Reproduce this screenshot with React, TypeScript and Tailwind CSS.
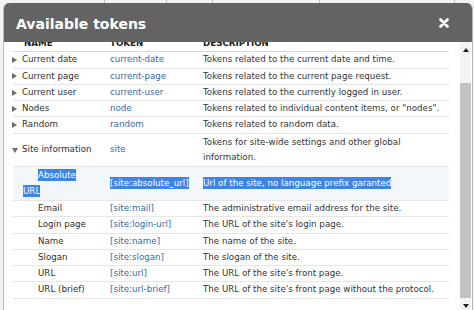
import React from "react";

type Row = {
  name: string;
  token: string;
  desc: React.ReactNode;
  open?: boolean;
  child?: boolean;
  tall?: boolean;
};

const rows: Row[] = [
  { name: "Current date", token: "current-date", desc: "Tokens related to the current date and time." },
  { name: "Current page", token: "current-page", desc: "Tokens related to the current page request." },
  { name: "Current user", token: "current-user", desc: "Tokens related to the currently logged in user." },
  { name: "Nodes", token: "node", desc: 'Tokens related to individual content items, or "nodes".' },
  { name: "Random", token: "random", desc: "Tokens related to random data." },
  {
    name: "Site information",
    token: "site",
    open: true,
    tall: true,
    desc: (
      <>
        Tokens for site-wide settings and other global
        <br />
        information.
      </>
    ),
  },
];

const children: Row[] = [
  { name: "Email", token: "[site:mail]", desc: "The administrative email address for the site.", child: true },
  { name: "Login page", token: "[site:login-url]", desc: "The URL of the site's login page.", child: true },
  { name: "Name", token: "[site:name]", desc: "The name of the site.", child: true },
  { name: "Slogan", token: "[site:slogan]", desc: "The slogan of the site.", child: true },
  { name: "URL", token: "[site:url]", desc: "The URL of the site's front page.", child: true },
  { name: "URL (brief)", token: "[site:url-brief]", desc: "The URL of the site's front page without the protocol.", child: true },
];

const Arrow = ({ open }: { open?: boolean }) => (
  <span className="inline-flex w-[10px] -ml-[1px] items-center">
    {open ? (
      <svg width="6" height="5" viewBox="0 0 6 5">
        <path d="M0 0 L6 0 L3 5 Z" fill="#6b6b6b" />
      </svg>
    ) : (
      <svg width="5" height="6" viewBox="0 0 5 6">
        <path d="M0 0 L5 3 L0 6 Z" fill="#6b6b6b" />
      </svg>
    )}
  </span>
);

const TokenRow = ({ row }: { row: Row }) => (
  <div
    className={
      row.tall
        ? "grid grid-cols-[97px_93px_246px] items-center border-b border-[#e6e6e6] leading-[15.3px] py-[1px]"
        : "grid grid-cols-[97px_93px_246px] items-center border-b border-[#e6e6e6] leading-[15.3px]"
    }
  >
    {row.child ? (
      <div className="pl-[10px] indent-[15px] text-[#2e2e2e]">{row.name}</div>
    ) : (
      <div className="flex items-center text-[#2e2e2e]">
        <Arrow open={row.open} />
        <span>{row.name}</span>
      </div>
    )}
    <div className="text-[#2f6ca8]">{row.token}</div>
    <div className="text-[#333]">{row.desc}</div>
  </div>
);

export default function App() {
  return (
    <div className="w-[474px] h-[310px] overflow-hidden bg-[#f2f2f2] font-['DejaVu_Sans',sans-serif]">
      {/* page behind the dialog */}
      <div className="flex h-[3px]">
        <div className="w-[105px] border-r border-[#bdbdbd]" />
        <div className="w-[62px] border-r border-[#bdbdbd]" />
        <div className="w-[46px] border-r border-[#bdbdbd]" />
        <div className="w-[107px] border-r border-[#bdbdbd]" />
        <div className="w-[135px] border-r border-[#bdbdbd]" />
      </div>

      <div className="ml-[3px] w-[470px] h-[320px] flex flex-col border-x border-[#b8b8b8] bg-white rounded-t-[6px] overflow-hidden">
        <div className="h-[39px] shrink-0 bg-[#636363] flex items-center justify-between pl-[12px] pr-[23px]">
          <span className="text-white font-bold text-[14px] leading-none pt-[2px]">
            Available tokens
          </span>
          <svg width="10" height="10" viewBox="0 0 10 10">
            <path d="M1.5 1.5 L8.5 8.5 M8.5 1.5 L1.5 8.5" stroke="#fff" strokeWidth="2.7" strokeLinecap="round" />
          </svg>
        </div>

        <div className="flex flex-1 overflow-hidden">
          <div className="w-[445px] shrink-0 overflow-hidden pl-[9px] text-[8.7px]">
            <div className="-mt-[6px] w-[436px]">
              <div className="grid grid-cols-[97px_93px_246px] border-b border-[#d9d9d9] leading-[15.3px] font-bold text-[#222] uppercase">
                <div className="pl-[11px]">Name</div>
                <div>Token</div>
                <div>Description</div>
              </div>

              {rows.map((r) => (
                <TokenRow key={r.name} row={r} />
              ))}

              <div className="grid grid-cols-[97px_93px_246px] items-center border-b border-[#e6e6e6] bg-[#f3f7fc] leading-[15.3px] py-[1px]">
                <div className="pl-[10px] indent-[15px] text-white">
                  <span className="bg-[#3d84e4] py-[1px]">Absolute</span>
                  <br />
                  <span className="bg-[#3d84e4] py-[1px]">URL</span>
                </div>
                <div>
                  <span className="bg-[#3d84e4] text-white py-[1px]">[site:absolute_url]</span>
                </div>
                <div>
                  <span className="bg-[#3d84e4] text-white py-[1px]">
                    Url of the site, no language prefix garanted
                  </span>
                </div>
              </div>

              {children.map((r) => (
                <TokenRow key={r.name} row={r} />
              ))}
            </div>
          </div>

          {/* scrollbar */}
          <div className="w-[11px] ml-[11px] flex flex-col bg-[#f3f3f3]">
            <div className="h-[41px] flex items-start justify-center pt-[6px]">
              <svg width="6" height="4" viewBox="0 0 6 4">
                <path d="M0 4 L3 0 L6 4 Z" fill="#222" />
              </svg>
            </div>
            <div className="h-[215px] bg-[#c2c2c2]" />
            <div className="flex justify-center pt-[6px]">
              <svg width="6" height="4" viewBox="0 0 6 4">
                <path d="M0 0 L6 0 L3 4 Z" fill="#222" />
              </svg>
            </div>
          </div>
        </div>
      </div>
    </div>
  );
}
